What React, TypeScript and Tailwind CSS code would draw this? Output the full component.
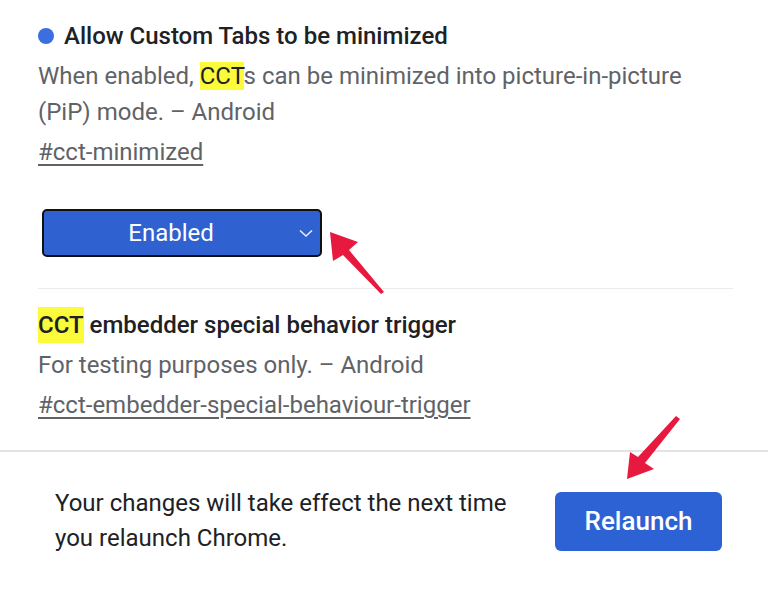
import React from "react";

export default function App() {
  return (
    <div
      className="relative w-[768px] h-[590px] bg-white overflow-hidden flex flex-col"
      style={{ fontFamily: "Roboto, 'Noto Sans', sans-serif" }}
    >
      <div className="pl-[38px] pr-[35px] pt-[18px]">
        <div className="flex items-center h-[36px] gap-[10px]">
          <span className="w-[16px] h-[16px] rounded-full bg-[#3b6fe0] shrink-0" />
          <span className="text-[24px] font-medium text-[#202124]">Allow Custom Tabs to be minimized</span>
        </div>
        <div className="mt-[4px] text-[24px] leading-[36px] text-[#5f6368] whitespace-nowrap">
          When enabled, <span className="bg-[#fbfb3c] text-[#202124]">CCT</span>s can be minimized into picture-in-picture
          <br />
          (PiP) mode. – Android
        </div>
        <div className="mt-[4px] text-[24px] leading-[36px] text-[#5f6368]">
          <span className="underline underline-offset-[4px]">#cct-minimized</span>
        </div>
        <div className="mt-[39px] ml-[4px] w-[280px] h-[48px] rounded-[5px] border-2 border-[#111] bg-[#2f62d0] flex items-center relative">
          <span className="flex-1 text-center text-white text-[24px] pr-[22px]">Enabled</span>
          <svg className="absolute right-[7px] top-[18px]" width="14" height="9" viewBox="0 0 14 9">
            <path d="M1 1.5 L7 7 L13 1.5" fill="none" stroke="#e8eefc" strokeWidth="1.6" />
          </svg>
        </div>
        <div className="mt-[31px] h-px bg-[#ebebeb]" />
        <div className="mt-[18px] h-[36px] flex items-center text-[24px] font-medium text-[#202124]">
          <span className="bg-[#fbfb3c]">CCT</span>&nbsp;embedder special behavior trigger
        </div>
        <div className="mt-[4px] text-[24px] leading-[36px] text-[#5f6368]">For testing purposes only. – Android</div>
        <div className="mt-[4px] text-[24px] leading-[36px] text-[#5f6368]">
          <span className="underline underline-offset-[4px]">#cct-embedder-special-behaviour-trigger</span>
        </div>
      </div>
      <div className="mt-[27px] flex-1 border-t-2 border-[#e3e3e3] flex items-center pl-[55px] pr-[46px] justify-between">
        <div className="text-[24px] leading-[35px] text-[#202124] whitespace-nowrap">
          Your changes will take effect the next time
          <br />
          you relaunch Chrome.
        </div>
        <div className="w-[167px] h-[59px] shrink-0 rounded-[6px] bg-[#2c62d3] flex items-center justify-center text-white text-[26px] font-medium">
          Relaunch
        </div>
      </div>
      <svg className="absolute left-0 top-0 pointer-events-none" width="768" height="590">
        <polygon
          points="330,232 358,242 349,250 384,292 381,294 343,255 333,261"
          fill="#e8193f"
        />
        <polygon
          points="627,479 630,452 638,457 676,416 680,419 645,463 654,469"
          fill="#e8193f"
        />
      </svg>
    </div>
  );
}
